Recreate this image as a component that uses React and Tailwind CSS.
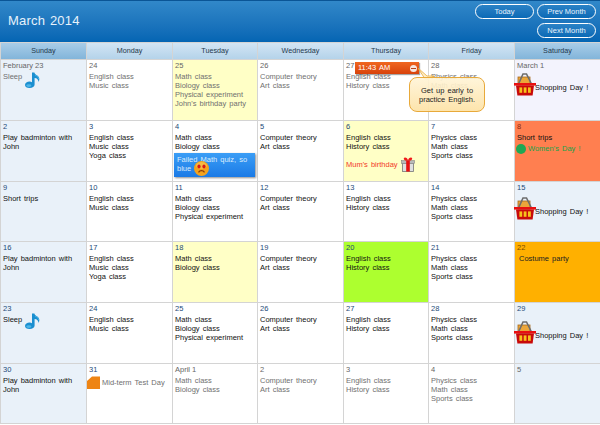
const CLS = {
  english: "English class",
  music: "Music class",
  yoga: "Yoga class",
  math: "Math class",
  biology: "Biology class",
  physical: "Physical experiment",
  computer: "Computer theory",
  art: "Art class",
  history: "History class",
  physics: "Physics class",
  sports: "Sports class",
};

function MusicNote() {
  return (
    <svg width="15" height="16" viewBox="0 0 15 16" className="shrink-0">
      <path d="M7 0.5 L9.4 0.5 C9.6 2 11 2.6 12.4 3.6 C14.4 5 15 7.4 13.6 10 C13.6 7.6 12 6.2 9.6 6 L9.6 12.6 C9.6 14.8 7.4 16 4.6 16 C1.8 16 0 14.8 0 13 C0 11 2.2 9.6 4.6 9.6 C5.6 9.6 6.4 9.8 7 10.2 Z" fill="#1b8fd0" />
      <ellipse cx="3.8" cy="13.6" rx="2.6" ry="1.4" fill="#4fb6e8" />
      <path d="M10 3 C12 3.6 13.4 5 13.6 7" fill="none" stroke="#52bdea" strokeWidth="0.8" />
    </svg>
  );
}

function Basket() {
  return (
    <svg width="22" height="23" viewBox="0 0 22 23" className="shrink-0">
      <rect x="4" y="4" width="12" height="8" fill="#eba63a" stroke="#a8691a" strokeWidth="0.8" />
      <path d="M4.5 11 L9 1 L12.5 1 L17.5 11" fill="none" stroke="#6d6d6d" strokeWidth="1.6" />
      <rect x="0" y="10" width="22" height="2.6" fill="#e81010" />
      <path d="M2 12.4 L20 12.4 L18.6 22.6 L3.4 22.6 Z" fill="#c80a0a" />
      <rect x="5.4" y="14.4" width="2.8" height="5.4" fill="#f7c21c" />
      <rect x="9.7" y="14.4" width="2.8" height="5.4" fill="#f7c21c" />
      <rect x="14" y="14.4" width="2.8" height="5.4" fill="#f7c21c" />
    </svg>
  );
}

function Gift() {
  return (
    <svg width="14" height="15" viewBox="0 0 14 15" className="shrink-0">
      <rect x="1.5" y="6" width="11" height="8.5" fill="#e0e0e0" stroke="#777" strokeWidth="0.8" />
      <rect x="0.5" y="3.6" width="13" height="3" fill="#b9b9b9" stroke="#777" strokeWidth="0.5" />
      <rect x="5.2" y="3.6" width="3.6" height="11" fill="#e80f0f" />
      <path d="M7 3.8 C2.6 4.4 1.8 0.6 4 0.6 C5.6 0.6 6.6 2 7 3.2 C7.4 2 8.4 0.6 10 0.6 C12.2 0.6 11.4 4.4 7 3.8 Z" fill="#ef1c1c" />
    </svg>
  );
}

function SadFace() {
  return (
    <svg width="15" height="15" viewBox="0 0 15 15" className="shrink-0">
      <circle cx="7.5" cy="7.5" r="7.5" fill="#f4a21c" />
      <ellipse cx="7.5" cy="4.6" rx="5.5" ry="3.5" fill="#f9cc5c" opacity="0.6" />
      <ellipse cx="5" cy="5.6" rx="1.6" ry="2" fill="#d81818" />
      <ellipse cx="10" cy="5.6" rx="1.6" ry="2" fill="#d81818" />
      <path d="M4.5 11.4 C5.8 9 9.2 9 10.5 11.4" fill="none" stroke="#8a3a08" strokeWidth="1.2" />
    </svg>
  );
}

function Cell({ date, items = [], dim, bg = "bg-white", dateColor, children, extra = "" }) {
  return (
    <div className={`${bg} relative pl-[2px] pt-px ${extra}`}>
      <div className={`h-[10px] leading-[10px] [word-spacing:0] ${dateColor || (dim ? "text-[#666]" : "text-[#1d4a78]")}`}>{date}</div>
      <div className={`mt-px ${dim ? "text-[#707070]" : "text-[#111]"}`}>
        {items.map((t) => (
          <div key={t} className="h-[9px] leading-[9px] whitespace-nowrap">{t}</div>
        ))}
      </div>
      {children}
    </div>
  );
}

function Sleep({ color, noteTop }) {
  return (
    <div className="flex items-start">
      <span className={`leading-[9px] mr-[3px] ${color}`}>Sleep</span>
      <span className={noteTop}><MusicNote /></span>
    </div>
  );
}

function Shopping({ top }) {
  return (
    <div className={`flex items-center -ml-[3px] ${top}`}>
      <Basket />
      <span className="text-[#111] whitespace-nowrap -ml-px mt-[7px]">Shopping Day !</span>
    </div>
  );
}

function Badminton() {
  return <div className="leading-[9px] text-[#111] w-[82px]">Play badminton with John</div>;
}

export default function App() {
  const sideBg = "bg-[#e9f1f9]";
  const yellow = "bg-[#ffffc6]";
  return (
    <div className="w-[600px] h-[425px] bg-white overflow-hidden text-[7.5px] font-['Liberation_Sans',Arial,sans-serif] [word-spacing:1px]">
      <div className="h-[42px] bg-gradient-to-b from-[#3188c9] to-[#0465b3] border-t border-[#0a5596] flex justify-between pl-[8px] pr-[4px]">
        <div className="text-[13px] leading-[40px] text-[#e6f2fb] tracking-[0.2px]">March 2014</div>
        <div className="flex flex-col items-end gap-[4px] pt-[3px]">
          <div className="flex gap-[3px]">
            <button className="w-[59px] h-[15px] rounded-full border border-white bg-gradient-to-b from-[#2a82c6] to-[#0a6ab6] text-[#e6f2fb] text-[7.5px]">Today</button>
            <button className="w-[59px] h-[15px] rounded-full border border-white bg-gradient-to-b from-[#2a82c6] to-[#0a6ab6] text-[#e6f2fb] text-[7.5px]">Prev Month</button>
          </div>
          <button className="w-[59px] h-[15px] rounded-full border border-white bg-gradient-to-b from-[#2a82c6] to-[#0a6ab6] text-[#e6f2fb] text-[7.5px]">Next Month</button>
        </div>
      </div>

      <div className="bg-[#d4d4d4] pl-px pb-px grid grid-cols-[85px_85px_84px_85px_84px_85px_85px] gap-px pt-px grid-rows-[16px_60px_60px_59px_60px_60px_59px] w-[600px]">
        {["Sunday", "Monday", "Tuesday", "Wednesday", "Thursday", "Friday", "Saturday"].map((d, i) => (
          <div
            key={d}
            className={`flex items-center justify-center text-[#24384c] text-[7.2px] bg-gradient-to-b ${
              i === 0 || i === 6 ? "from-[#a9cde8] to-[#82b5da]" : "from-[#d3e5f4] to-[#b4d3ea]"
            }`}
          >
            {d}
          </div>
        ))}

        {/* row 1 */}
        <Cell date="February 23" dim bg={sideBg}>
          <Sleep color="text-[#707070]" noteTop="mt-0" />
        </Cell>
        <Cell date="24" dim items={[CLS.english, CLS.music]} />
        <Cell date="25" dim bg={yellow} items={[CLS.math, CLS.biology, CLS.physical, "John's birthday party"]} />
        <Cell date="26" dim items={[CLS.computer, CLS.art]} />
        <Cell date="27" dim items={[CLS.english, CLS.history]} extra="z-10">
          <div className="absolute left-[11px] top-[2px] w-[64px] h-[12px] bg-gradient-to-b from-[#f0661f] to-[#d8420a] flex items-center justify-between pl-[3px] pr-[2px] text-white shadow-[1px_1px_1px_rgba(0,0,0,0.35)]">
            <span className="leading-none">11:43 AM</span>
            <span className="w-[7px] h-[7px] rounded-full bg-[#f6e6e0] flex items-center justify-center">
              <span className="w-[5px] h-px bg-[#b8431a]" />
            </span>
          </div>
          <svg width="18" height="12" viewBox="0 0 18 12" className="absolute left-[74px] top-[8px]">
            <path d="M0 0 L9 8 L16 8 L10 11 L7 11 Z" fill="#fdeec8" stroke="#e8a93a" strokeWidth="0.8" />
          </svg>
          <div className="absolute left-[65px] top-[17px] w-[76px] h-[35px] rounded-lg border border-[#e8a93a] bg-gradient-to-b from-[#fff4d6]/90 to-[#fde3a8]/95 flex items-center justify-center text-center leading-[9px] text-[#222]">
            Get up early to<br />practice English.
          </div>
        </Cell>
        <Cell date="28" dim items={[CLS.physics, CLS.math, CLS.sports]} />
        <Cell date="March 1" dim bg="bg-[#f3f3fd]">
          <Shopping top="mt-[2px]" />
        </Cell>

        {/* row 2 */}
        <Cell date="2" bg={sideBg}>
          <Badminton />
        </Cell>
        <Cell date="3" items={[CLS.english, CLS.music, CLS.yoga]} />
        <Cell date="4" items={[CLS.math, CLS.biology]}>
          <div className="-ml-px mt-[2px] w-[81px] h-[24px] bg-gradient-to-b from-[#3b9ef6] to-[#1a7ae6] text-[#dcecfb] pl-[3px] pt-[2px] leading-[9px] shadow-[1px_1px_2px_rgba(0,0,0,0.45)]">
            Failed Math quiz, so
            <div className="flex items-center -mt-[3px] gap-[3px]">
              <span>blue</span>
              <SadFace />
            </div>
          </div>
        </Cell>
        <Cell date="5" items={[CLS.computer, CLS.art]} />
        <Cell date="6" bg={yellow} items={[CLS.english, CLS.history]}>
          <div className="flex items-center gap-[3px] mt-[6px]">
            <span className="text-[#f2382a] whitespace-nowrap">Mum's birthday</span>
            <Gift />
          </div>
        </Cell>
        <Cell date="7" items={[CLS.physics, CLS.math, CLS.sports]} />
        <Cell date="8" bg="bg-[#ff7f50]" dateColor="text-[#8a2a10]" items={["Short trips"]}>
          <div className="flex items-start gap-[2px] mt-[2px] -ml-px">
            <span className="w-[10px] h-[10px] rounded-full bg-[#1fa854]" />
            <span className="text-[#16a34a] whitespace-nowrap leading-[9px]">Women's Day !</span>
          </div>
        </Cell>

        {/* row 3 */}
        <Cell date="9" bg={sideBg} items={["Short trips"]} />
        <Cell date="10" items={[CLS.english, CLS.music]} />
        <Cell date="11" items={[CLS.math, CLS.biology, CLS.physical]} />
        <Cell date="12" items={[CLS.computer, CLS.art]} />
        <Cell date="13" items={[CLS.english, CLS.history]} />
        <Cell date="14" items={[CLS.physics, CLS.math, CLS.sports]} />
        <Cell date="15" bg={sideBg}>
          <Shopping top="mt-[4px]" />
        </Cell>

        {/* row 4 */}
        <Cell date="16" bg={sideBg}>
          <Badminton />
        </Cell>
        <Cell date="17" items={[CLS.english, CLS.music, CLS.yoga]} />
        <Cell date="18" bg={yellow} items={[CLS.math, CLS.biology]} />
        <Cell date="19" items={[CLS.computer, CLS.art]} />
        <Cell date="20" bg="bg-[#adff2f]" items={[CLS.english, CLS.history]} />
        <Cell date="21" items={[CLS.physics, CLS.math, CLS.sports]} />
        <Cell date="22" bg="bg-[#ffb000]" dateColor="text-[#7a4a00]">
          <div className="pl-[2px] leading-[9px] text-[#222]">Costume party</div>
        </Cell>

        {/* row 5 */}
        <Cell date="23" bg={sideBg}>
          <Sleep color="text-[#111]" noteTop="-mt-[2px]" />
        </Cell>
        <Cell date="24" items={[CLS.english, CLS.music]} />
        <Cell date="25" items={[CLS.math, CLS.biology, CLS.physical]} />
        <Cell date="26" items={[CLS.computer, CLS.art]} />
        <Cell date="27" items={[CLS.english, CLS.history]} />
        <Cell date="28" items={[CLS.physics, CLS.math, CLS.sports]} />
        <Cell date="29" bg={sideBg}>
          <Shopping top="mt-[7px]" />
        </Cell>

        {/* row 6 */}
        <Cell date="30" bg={sideBg}>
          <Badminton />
        </Cell>
        <Cell date="31">
          <div className="flex items-center gap-[2px] -ml-[2px]">
            <svg width="13" height="13" viewBox="0 0 13 13" className="shrink-0">
              <path d="M5 0.5 L13 0.5 L13 13 L0 13 L0 5 Z" fill="#ee8413" />
            </svg>
            <span className="text-[#707070] whitespace-nowrap">Mid-term Test Day</span>
          </div>
        </Cell>
        <Cell date="April 1" dim items={[CLS.math, CLS.biology]} />
        <Cell date="2" dim items={[CLS.computer, CLS.art]} />
        <Cell date="3" dim items={[CLS.english, CLS.history]} />
        <Cell date="4" dim items={[CLS.physics, CLS.math, CLS.sports]} />
        <Cell date="5" dim bg={sideBg} />
      </div>
    </div>
  );
}
